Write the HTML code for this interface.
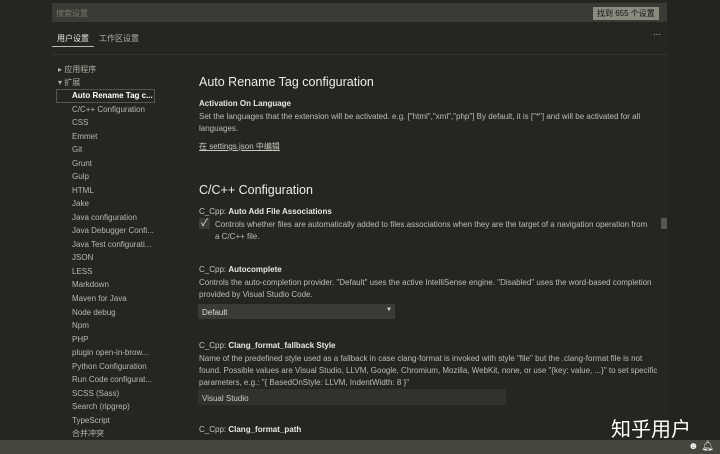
<!DOCTYPE html><html><head><meta charset="utf-8"><style>
body{margin:0;width:720px;height:454px;background:#262621;overflow:hidden;position:relative;font-family:"Liberation Sans","Noto Sans CJK SC",sans-serif;color:#c8c8c0;font-size:8px}
.a{position:absolute;white-space:nowrap}
.side div{height:13.54px;line-height:13.54px}
.h{font-size:12.5px;color:#ececec}
.b{color:#e6e6e6;font-weight:bold}
.d{color:#bdbdb5;line-height:12px}
</style></head><body>
<div class="a" style="left:52px;top:3px;width:615px;height:19px;background:#3b3b35"></div>
<div class="a" style="left:667px;top:0;width:53px;height:440px;background:#232320"></div>
<div class="a" style="left:56px;top:8px;color:#77776f">搜索设置</div>
<div class="a" style="left:593px;top:7px;background:#8a8a7e;color:#111;padding:1px 4px;font-size:8px">找到 655 个设置</div>
<div class="a" style="left:57px;top:33px;color:#e8e8e8">用户设置</div>
<div class="a" style="left:99px;top:33px;color:#b0b0a8">工作区设置</div>
<div class="a" style="left:52px;top:46px;width:42px;height:1px;background:#bbb"></div>
<div class="a" style="left:52px;top:54px;width:615px;height:1px;background:#333"></div>
<div class="a" style="left:653px;top:30px;color:#ddd">···</div>
<div class="a" style="left:58px;top:63px;color:#b0b0a8;line-height:13px">▸ 应用程序<br>▾ 扩展</div>
<div class="a" style="left:56px;top:89px;width:97px;height:12px;border:1px solid #555"></div>
<div class="a side" style="left:72px;top:89px;color:#b8b8b0">
<div class="b" style="color:#fff">Auto Rename Tag c...</div><div>C/C++ Configuration</div><div>CSS</div><div>Emmet</div><div>Git</div><div>Grunt</div><div>Gulp</div><div>HTML</div><div>Jake</div><div>Java configuration</div><div>Java Debugger Confi...</div><div>Java Test configurati...</div><div>JSON</div><div>LESS</div><div>Markdown</div><div>Maven for Java</div><div>Node debug</div><div>Npm</div><div>PHP</div><div>plugin open-in-brow...</div><div>Python Configuration</div><div>Run Code configurat...</div><div>SCSS (Sass)</div><div>Search (ripgrep)</div><div>TypeScript</div><div>合并冲突</div></div>
<div class="a h" style="left:199px;top:75px">Auto Rename Tag configuration</div>
<div class="a b" style="left:199px;top:99px">Activation On Language</div>
<div class="a d" style="left:199px;top:111px">Set the languages that the extension will be activated. e.g. ["html","xml","php"] By default, it is ["*"] and will be activated for all<br>languages.</div>
<div class="a" style="left:199px;top:141px;text-decoration:underline">在 settings.json 中编辑</div>
<div class="a h" style="left:199px;top:183px">C/C++ Configuration</div>
<div class="a" style="left:199px;top:207px">C_Cpp: <span class="b">Auto Add File Associations</span></div>
<div class="a" style="left:199px;top:218px;width:11px;height:11px;background:#3b3b35;color:#eee;font-size:10px;line-height:11px;text-align:center">✓</div>
<div class="a d" style="left:215px;top:219px">Controls whether files are automatically added to files.associations when they are the target of a navigation operation from<br>a C/C++ file.</div>
<div class="a" style="left:661px;top:218px;width:6px;height:11px;background:#555"></div>
<div class="a" style="left:199px;top:265px">C_Cpp: <span class="b">Autocomplete</span></div>
<div class="a d" style="left:199px;top:277px">Controls the auto-completion provider. "Default" uses the active IntelliSense engine. "Disabled" uses the word-based completion<br>provided by Visual Studio Code.</div>
<div class="a" style="left:198px;top:304px;width:197px;height:15px;background:#3b3b35"></div>
<div class="a" style="left:202px;top:308px;color:#ddd">Default</div>
<div class="a" style="left:386px;top:307px;color:#ddd;font-size:6px">▼</div>
<div class="a" style="left:199px;top:341px">C_Cpp: <span class="b">Clang_format_fallback Style</span></div>
<div class="a d" style="left:199px;top:353px">Name of the predefined style used as a fallback in case clang-format is invoked with style "file" but the .clang-format file is not<br>found. Possible values are Visual Studio, LLVM, Google, Chromium, Mozilla, WebKit, none, or use "{key: value, ...}" to set specific<br>parameters, e.g.: "{ BasedOnStyle: LLVM, IndentWidth: 8 }"</div>
<div class="a" style="left:198px;top:389px;width:308px;height:16px;background:#32322d"></div>
<div class="a" style="left:202px;top:394px;color:#ccc">Visual Studio</div>
<div class="a" style="left:199px;top:425px">C_Cpp: <span class="b">Clang_format_path</span></div>
<div class="a" style="left:611px;top:413px;font-size:20px;color:#fff;font-family:'Noto Sans CJK SC',sans-serif">知乎用户</div>
<div class="a" style="left:0;top:440px;width:720px;height:14px;background:#45453d"></div>
<div class="a" style="left:688px;top:441px;color:#eee;font-size:10px">☻ 🔔︎</div>
</body></html>
